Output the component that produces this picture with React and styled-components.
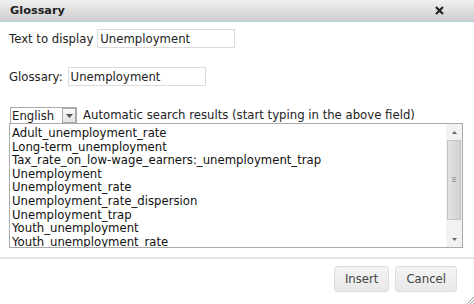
import React from "react";
import styled, { createGlobalStyle } from "styled-components";

const GlobalStyle = createGlobalStyle`
	html, body {
		margin: 0;
		padding: 0;
		background: #fff;
	}
	body {
		font-family: "DejaVu Sans", Verdana, sans-serif;
		font-size: 11.7px;
		color: #222;
	}
`;

const results = [
	"Adult_unemployment_rate",
	"Long-term_unemployment",
	"Tax_rate_on_low-wage_earners:_unemployment_trap",
	"Unemployment",
	"Unemployment_rate",
	"Unemployment_rate_dispersion",
	"Unemployment_trap",
	"Youth_unemployment",
	"Youth_unemployment_rate"
];

export default function App() {
	return (
		<>
			<GlobalStyle />
			<Dialog>
				<Header>
					<Title>Glossary</Title>
					<Close>
						<svg width="9" height="9" viewBox="0 0 9 9">
							<path d="M1 1L8 8M8 1L1 8" stroke="#222" strokeWidth="2.2" />
						</svg>
					</Close>
				</Header>
				<Body>
					<FieldRow>
						<Label>Text to display</Label>
						<TextInput defaultValue="Unemployment" />
					</FieldRow>
					<FieldRow $gap={5}>
						<Label>Glossary:</Label>
						<TextInput defaultValue="Unemployment" />
					</FieldRow>
					<ResultsBar>
						<LangSelect>
							<span>English</span>
							<SelectArrow>
								<svg width="7" height="4" viewBox="0 0 7 4">
									<path d="M0 0h7L3.5 4z" fill="#555" />
								</svg>
							</SelectArrow>
						</LangSelect>
						<Hint>Automatic search results (start typing in the above field)</Hint>
					</ResultsBar>
					<ListBox>
						<List>
							{results.map(r => (
								<Item key={r}>{r}</Item>
							))}
						</List>
						<Scrollbar>
							<ScrollBtn>
								<svg width="5" height="3" viewBox="0 0 5 3">
									<path d="M2.5 0L5 3H0z" fill="#666" />
								</svg>
							</ScrollBtn>
							<Thumb>
								<Grip />
							</Thumb>
							<Track />
							<ScrollBtn>
								<svg width="5" height="3" viewBox="0 0 5 3">
									<path d="M0 0h5L2.5 3z" fill="#666" />
								</svg>
							</ScrollBtn>
						</Scrollbar>
					</ListBox>
				</Body>
				<Footer>
					<Button>Insert</Button>
					<Button>Cancel</Button>
				</Footer>
				<Resize>
					<svg width="8" height="8" viewBox="0 0 8 8">
						<path d="M8 1L1 8M8 4L4 8M8 7L7 8" stroke="#999" strokeWidth="1" />
					</svg>
				</Resize>
			</Dialog>
		</>
	);
}

const Dialog = styled.div`
	position: relative;
	width: 474px;
	height: 304px;
	background: #fff;
	overflow: hidden;
`;

const Header = styled.div`
	height: 21px;
	display: flex;
	align-items: center;
	justify-content: space-between;
	padding: 0 30px 0 10px;
	background: linear-gradient(#efefef, #cfcfcf);
	border-bottom: 1px solid #a8d4dc;
`;

const Title = styled.div`
	font-weight: bold;
	font-size: 11.3px;
	color: #222;
`;

const Close = styled.div`
	line-height: 0;
`;

const Body = styled.div`
	padding: 7px 11px 0 9px;
`;

const FieldRow = styled.div`
	display: flex;
	align-items: center;
	gap: ${p => p.$gap || 4}px;
	margin-bottom: 19px;
`;

const Label = styled.span`
	color: #222;
`;

const TextInput = styled.input`
	width: 132px;
	height: 15px;
	padding: 1px 2px;
	border: 1px solid #dcdcdc;
	font-family: inherit;
	font-size: 11.7px;
	color: #222;
	outline: none;
`;

const ResultsBar = styled.div`
	display: flex;
	align-items: center;
	gap: 6px;
	margin-top: 21px;
	padding-left: 1px;
`;

const LangSelect = styled.div`
	display: flex;
	align-items: center;
	height: 15px;
	width: 64px;
	border: 1px solid #aaa;
	border-bottom: none;
	padding-left: 1px;
	justify-content: space-between;
`;

const SelectArrow = styled.div`
	width: 12px;
	height: 13px;
	display: flex;
	align-items: center;
	justify-content: center;
	border: 1px solid #aaa;
	background: linear-gradient(#fafafa, #e2e2e2);
`;

const Hint = styled.span`
	color: #222;
`;

const ListBox = styled.div`
	display: flex;
	height: 123px;
	border: 1px solid #aaa;
`;

const List = styled.div`
	flex: 1;
	padding: 3px 2px 0;
	overflow: hidden;
`;

const Item = styled.div`
	line-height: 13.6px;
	white-space: nowrap;
	color: #111;
`;

const Scrollbar = styled.div`
	width: 16px;
	display: flex;
	flex-direction: column;
	background: #f2f2f2;
`;

const ScrollBtn = styled.div`
	height: 16px;
	display: flex;
	align-items: center;
	justify-content: center;
`;

const Thumb = styled.div`
	height: 78px;
	margin: 0 1px;
	background: linear-gradient(90deg, #e2e2e2, #d2d2d2);
	border: 1px solid #c4c4c4;
	display: flex;
	align-items: center;
	justify-content: center;
`;

const Grip = styled.div`
	width: 4px;
	height: 6px;
	background: repeating-linear-gradient(#999 0 1px, transparent 1px 2px);
`;

const Track = styled.div`
	flex: 1;
`;

const Footer = styled.div`
	margin-top: 9px;
	border-top: 2px solid #e4e4e4;
	display: flex;
	justify-content: flex-end;
	gap: 6px;
	padding: 7px 17px 0 0;
`;

const Button = styled.button`
	height: 26px;
	padding: 0 10px;
	border: 1px solid #dcdcdc;
	border-radius: 3px;
	background: linear-gradient(#f4f4f4, #e8e8e8);
	font-family: inherit;
	font-size: 11.7px;
	color: #444;
`;

const Resize = styled.div`
	position: absolute;
	right: 0;
	bottom: 0;
	width: 8px;
	height: 8px;
	line-height: 0;
`;
